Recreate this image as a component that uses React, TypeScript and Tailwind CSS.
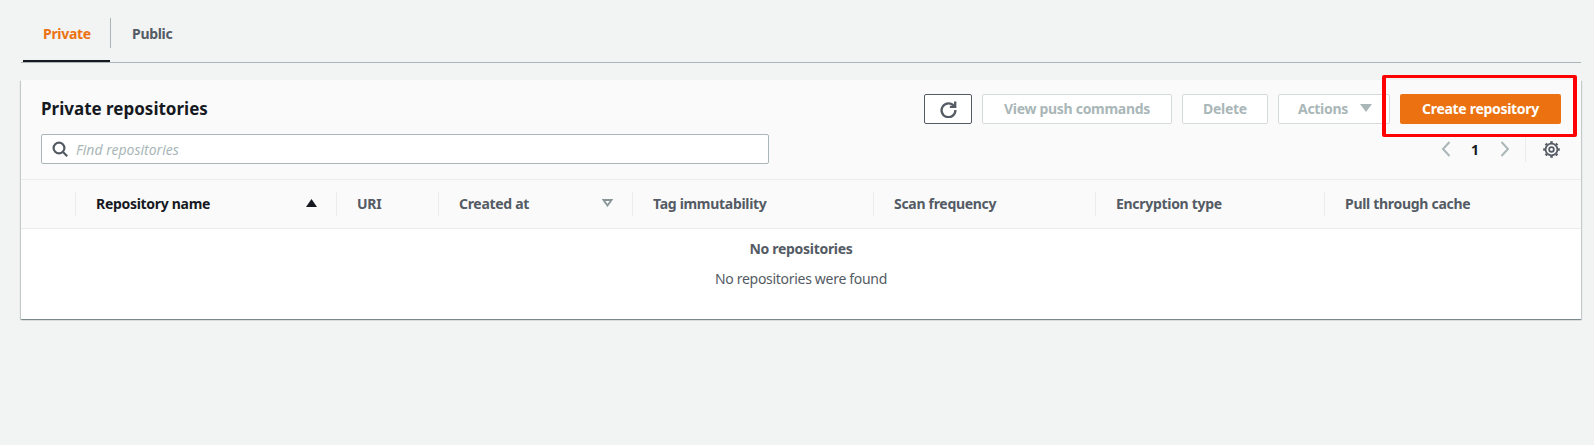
import React from 'react';

const columns = [
    { label: 'Repository name', width: 'w-[261px]', dark: true, sort: 'up' },
    { label: 'URI', width: 'w-[102px]' },
    { label: 'Created at', width: 'w-[194px]', sort: 'down' },
    { label: 'Tag immutability', width: 'w-[241px]' },
    { label: 'Scan frequency', width: 'w-[222px]' },
    { label: 'Encryption type', width: 'w-[229px]' },
    { label: 'Pull through cache', width: 'flex-1' },
];

const RefreshIcon = () => (
    <svg width="17" height="17" viewBox="0 0 16 16" fill="none" stroke="#545b64" strokeWidth="2.200">
        <path d="M13.200 4.800A6.500 6.500 0 1 0 14.500 8.500" />
        <path d="M14.300 0.500v5H9.300" />
    </svg>
);

const SearchIcon = () => (
    <svg width="16" height="16" viewBox="0 0 16 16" fill="none" stroke="#545b64" strokeWidth="2.200">
        <circle cx="7" cy="7" r="5.400" />
        <path d="M10.800 10.800L15.200 15.200" />
    </svg>
);

const GearIcon = () => (
    <svg width="17" height="17" viewBox="0 0 16 16" fill="none" stroke="#545b64">
        <circle cx="8" cy="8" r="5.600" strokeWidth="1.700" />
        <circle cx="8" cy="8" r="2.200" strokeWidth="1.600" />
        <path d="M8 .2v1.600M8 14.200v1.600M.2 8h1.600M14.200 8h1.600M2.500 2.500l1.100 1.100M12.400 12.400l1.100 1.100M2.500 13.500l1.100-1.100M12.400 3.600l1.100-1.100" strokeWidth="2.400" />
    </svg>
);

const Chevron = ({ d }: { d: string }) => (
    <svg width="10" height="16" viewBox="0 0 10 16" fill="none" stroke="#aab7b8" strokeWidth="2">
        <path d={d} />
    </svg>
);

const SortUp = () => (
    <svg width="11" height="8" viewBox="0 0 11 8"><path d="M5.500 0L11 8H0z" fill="#16191f" /></svg>
);

const SortDown = () => (
    <svg width="11" height="8" viewBox="0 0 11 8" fill="none" stroke="#879596" strokeWidth="1.800"><path d="M1.500 1h8L5.500 6.500z" /></svg>
);

const OutlineButton = ({ children, width }: { children: React.ReactNode; width: string }) => (
    <button className={`${width} h-[30px] rounded-[2px] border border-[#d5dbdb] bg-white pb-[2px] text-[14px] font-bold text-[#aab7b8] flex items-center justify-center gap-[12px]`}>
        {children}
    </button>
);

export default function App() {
    return (
        <div className="h-[445px] w-[1594px] overflow-hidden bg-[#f2f3f3] text-[14px] tracking-[-0.3px] text-[#545b64] [font-family:'Noto_Sans',sans-serif]">
            {/* Tabs */}
            <div className="ml-[21px] mr-[13px] flex h-[63px] items-start border-b border-[#aab7b8] pt-[18px]">
                <div className="relative ml-[2px] flex h-[30px] w-[87px] items-center pl-[20px] font-bold text-[#ec7211]">
                    Private
                    <div className="absolute -bottom-[14px] left-0 h-[2px] w-full bg-[#16191f]" />
                </div>
                <div className="flex h-[30px] items-center border-l border-[#aab7b8] pl-[21px] font-bold">Public</div>
            </div>

            {/* Card */}
            <div className="relative ml-[21px] mt-[17px] h-[239px] w-[1560px] bg-white shadow-[0_1px_1px_0_rgba(0,28,36,0.3),1px_1px_1px_0_rgba(0,28,36,0.15),-1px_1px_1px_0_rgba(0,28,36,0.15)]">
                <div className="h-[100px] border-b border-[#eaeded] bg-[#fafafa] pl-[20px] pr-[20px] pt-[14px]">
                    <div className="flex h-[30px] items-center justify-between">
                        <h2 className="text-[17px] font-bold tracking-normal text-[#16191f]">Private repositories</h2>
                        <div className="flex gap-[10px]">
                            <button className="flex h-[30px] w-[48px] items-center justify-center rounded-[2px] border border-[#545b64] bg-white">
                                <RefreshIcon />
                            </button>
                            <OutlineButton width="w-[190px]">View push commands</OutlineButton>
                            <OutlineButton width="w-[86px]">Delete</OutlineButton>
                            <OutlineButton width="w-[112px] pl-[2px]">
                                Actions
                                <svg width="12" height="8" viewBox="0 0 12 8"><path d="M0 0h12L6 8z" fill="#aab7b8" /></svg>
                            </OutlineButton>
                            <button className="h-[30px] w-[161px] rounded-[2px] bg-[#ec7211] pb-[2px] text-[14px] font-bold text-white">Create repository</button>
                        </div>
                    </div>
                    <div className="mt-[10px] flex h-[30px] items-center justify-between">
                        <div className="flex h-[30px] w-[728px] items-center gap-[8px] rounded-[2px] border border-[#aab7b8] bg-white pl-[10px]">
                            <SearchIcon />
                            <span className="italic tracking-normal text-[#aab7b8]">Find repositories</span>
                        </div>
                        <div className="flex items-center">
                            <Chevron d="M8.500 1L2 8l6.500 7" />
                            <span className="ml-[20px] mr-[21px] w-[8px] font-bold text-[#16191f]">1</span>
                            <Chevron d="M1.500 1L8 8l-6.500 7" />
                            <div className="ml-[15px] h-[25px] border-l border-[#eaeded]" />
                            <div className="ml-[17px] mr-[1px]"><GearIcon /></div>
                        </div>
                    </div>
                </div>

                {/* Table header */}
                <div className="flex h-[49px] items-center border-b border-[#eaeded] bg-[#fafafa] pl-[54px]">
                    {columns.map(col => (
                        <div key={col.label} className={`${col.width} flex h-[24px] items-center justify-between border-l border-[#eaeded] pb-[2px] pl-[20px] pr-[19px] font-bold ${col.dark ? 'text-[#16191f]' : 'text-[#545b64]'}`}>
                            {col.label}
                            {col.sort === 'up' && <SortUp />}
                            {col.sort === 'down' && <SortDown />}
                        </div>
                    ))}
                </div>

                {/* Empty state */}
                <div className="flex flex-col items-center pt-[10px]">
                    <div className="font-bold leading-[20px]">No repositories</div>
                    <div className="mt-[10px] leading-[20px]">No repositories were found</div>
                </div>

                {/* Red highlight drawn over the button */}
                <div className="absolute left-[1361px] top-[-5px] h-[62px] w-[195px] rounded-[2px] border-x-[4px] border-y-[3px] border-[#ff0000]" />
            </div>
        </div>
    );
}
